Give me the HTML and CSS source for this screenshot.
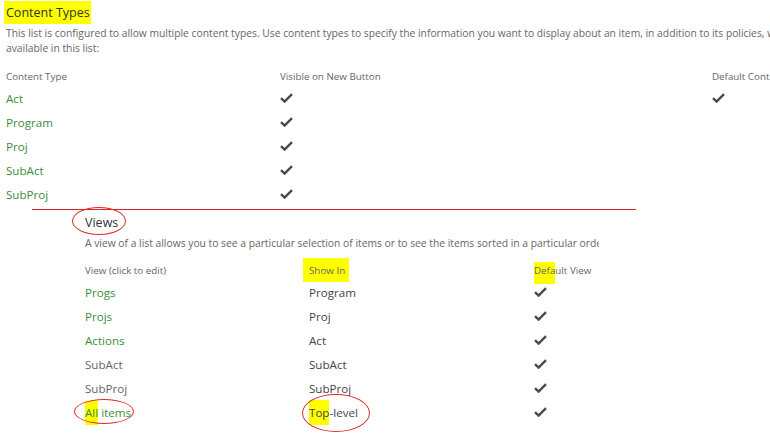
FILE: index.html
```html
<!DOCTYPE html>
<html lang="en">
<head>
  <meta charset="UTF-8">
  <title>List Settings</title>
  <link rel="stylesheet" href="styles.css">
</head>
<body>
  <div class="page">
    <!-- Content types -->
    <section class="ctypes">
      <h2 class="title"><span class="hl hl-title">Content Types</span></h2>
      <p class="desc desc-wide">This list is configured to allow multiple content types. Use content types to specify the information you want to display about an item, in addition to its policies, workflows, or other behavior. The following content types are currently<br>available in this list:</p>
      <div class="grid ct-grid">
        <div class="head">Content Type</div>
        <div class="head">Visible on New Button</div>
        <div class="head">Default Content Type</div>

        <div class="cell link">Act</div>
        <div class="cell"><svg class="check" viewBox="0 0 13 10"><path d="M1 5.2 L4.6 8.6 L12 1.2"/></svg></div>
        <div class="cell"><svg class="check" viewBox="0 0 13 10"><path d="M1 5.2 L4.6 8.6 L12 1.2"/></svg></div>

        <div class="cell link">Program</div>
        <div class="cell"><svg class="check" viewBox="0 0 13 10"><path d="M1 5.2 L4.6 8.6 L12 1.2"/></svg></div>
        <div class="cell"></div>

        <div class="cell link">Proj</div>
        <div class="cell"><svg class="check" viewBox="0 0 13 10"><path d="M1 5.2 L4.6 8.6 L12 1.2"/></svg></div>
        <div class="cell"></div>

        <div class="cell link">SubAct</div>
        <div class="cell"><svg class="check" viewBox="0 0 13 10"><path d="M1 5.2 L4.6 8.6 L12 1.2"/></svg></div>
        <div class="cell"></div>

        <div class="cell link">SubProj</div>
        <div class="cell"><svg class="check" viewBox="0 0 13 10"><path d="M1 5.2 L4.6 8.6 L12 1.2"/></svg></div>
        <div class="cell"></div>
      </div>
    </section>

    <div class="divider"></div>

    <!-- Views -->
    <section class="views">
      <h2 class="title views-title">Views<span class="ring ring-views"></span></h2>
      <p class="desc desc-clip">A view of a list allows you to see a particular selection of items or to see the items sorted in a particular order. View the list of views</p>
      <div class="grid v-grid">
        <div class="head">View (click to edit)</div>
        <div class="head"><span class="hl hl-show">Show In</span></div>
        <div class="head"><span class="hl hl-def">Defa</span>ult View</div>

        <div class="cell link">Progs</div>
        <div class="cell val">Program</div>
        <div class="cell"><svg class="check" viewBox="0 0 13 10"><path d="M1 5.2 L4.6 8.6 L12 1.2"/></svg></div>

        <div class="cell link">Projs</div>
        <div class="cell val">Proj</div>
        <div class="cell"><svg class="check" viewBox="0 0 13 10"><path d="M1 5.2 L4.6 8.6 L12 1.2"/></svg></div>

        <div class="cell link">Actions</div>
        <div class="cell val">Act</div>
        <div class="cell"><svg class="check" viewBox="0 0 13 10"><path d="M1 5.2 L4.6 8.6 L12 1.2"/></svg></div>

        <div class="cell visited">SubAct</div>
        <div class="cell val">SubAct</div>
        <div class="cell"><svg class="check" viewBox="0 0 13 10"><path d="M1 5.2 L4.6 8.6 L12 1.2"/></svg></div>

        <div class="cell visited">SubProj</div>
        <div class="cell val">SubProj</div>
        <div class="cell"><svg class="check" viewBox="0 0 13 10"><path d="M1 5.2 L4.6 8.6 L12 1.2"/></svg></div>

        <div class="cell link marked"><span><span class="hl hl-all">All</span> items</span><span class="ring ring-all"></span></div>
        <div class="cell val marked"><span><span class="hl hl-top">Top</span>-level</span><span class="ring ring-top"></span></div>
        <div class="cell"><svg class="check" viewBox="0 0 13 10"><path d="M1 5.2 L4.6 8.6 L12 1.2"/></svg></div>
      </div>
    </section>
  </div>
</body>
</html>
```

FILE: styles.css
```css
/* Page base */
html, body {
  margin: 0;
  padding: 0;
  background: #fff;
}

.page {
  width: 770px;
  height: 435px;
  overflow: hidden;
  font-family: "Open Sans", "Noto Sans", sans-serif;
  color: #444;
}

/* Section headings */
.title {
  margin: 0;
  font-size: 12.5px;
  font-weight: normal;
  color: #333;
  line-height: 20px;
}

.ctypes {
  padding: 3px 0 0 6px;
}

.views {
  padding-left: 85px;
  position: relative;
}

.views-title {
  position: relative;
  display: inline-block;
  margin-top: -1px;
}

/* Description text */
.desc {
  margin: 0;
  font-size: 10.3px;
  line-height: 15px;
  color: #666;
}

.desc-wide {
  width: 1000px;
  white-space: nowrap;
  margin-top: 3px;
}

.desc-clip {
  width: 514px;
  height: 15px;
  white-space: nowrap;
  overflow: hidden;
  margin-top: 3px;
}

/* Tables */
.grid {
  display: grid;
  grid-auto-rows: 24px;
}

.ct-grid {
  grid-template-columns: 274px 432px 200px;
  margin-top: 11px;
  grid-template-rows: 19px;
}

.v-grid {
  grid-template-columns: 224px 225px 200px;
  margin-top: 10px;
  grid-template-rows: 19px;
}

.head {
  font-size: 9.8px;
  color: #666;
  line-height: 20px;
  white-space: nowrap;
}

.cell {
  display: flex;
  align-items: center;
  font-size: 11.6px;
  white-space: nowrap;
}

.link {
  color: #3b8d3b;
}

.visited {
  color: #666;
}

.val {
  color: #444;
}

.check {
  width: 13px;
  height: 10px;
  fill: none;
  stroke: #4a4a4a;
  stroke-width: 2.4;
}

/* Red divider */
.divider {
  margin: 3px 0 0 32px;
  width: 604px;
  height: 1px;
  background: #d9232d;
}

/* Yellow marker highlights */
.hl {
  background: #ffff00;
}

.hl-title {
  padding: 3px 1px 3px 0;
  margin-left: -2px;
  padding-left: 2px;
}

.hl-show {
  padding: 6px 4px 5px 6px;
  margin-left: -6px;
}

.hl-def {
  padding: 2px 0 7px 0;
}

.hl-all {
  padding: 4px 0 5px 0;
}

.hl-top {
  padding: 5px 0 5px 0;
}

/* Red hand-drawn rings */
.marked {
  position: relative;
}

.ring {
  position: absolute;
  border: 1px solid #e02a2a;
  border-radius: 50%;
  pointer-events: none;
}

.ring-views {
  left: -13px;
  top: -6px;
  width: 52px;
  height: 26px;
}

.ring-all {
  left: -11px;
  top: -1px;
  width: 58px;
  height: 23px;
}

.ring-top {
  left: -7px;
  top: -6px;
  width: 66px;
  height: 36px;
}
```
